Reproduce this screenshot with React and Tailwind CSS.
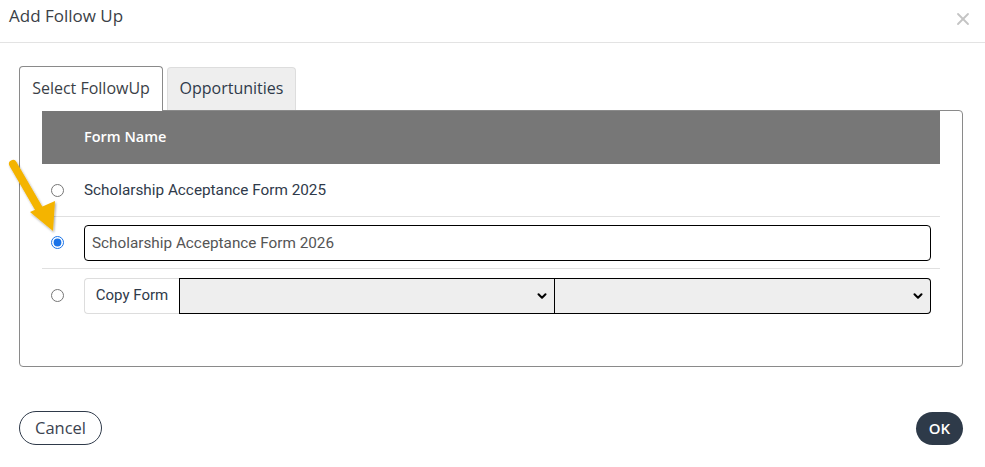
import { ChevronDown, X } from 'lucide-react'

export default function App() {
  return (
    <div className="relative w-[985px] h-[467px] bg-white overflow-hidden font-['Roboto',sans-serif]">
      <div className="flex items-center justify-between h-[43px] border-b border-[#e3e3e3] pl-[9px] pr-[12px]">
        <h1 className="text-[17px] text-[#3b3f47] font-['Open_Sans',sans-serif] -mt-[11px]">Add Follow Up</h1>
        <X size={20} strokeWidth={2.2} className="text-[#c4c4c4] -mt-[4px]" />
      </div>

      <div className="pt-[23px] pl-[19px] pr-[22px] w-full">
        <div className="flex items-end gap-[4px]">
          <div className="relative z-10 -mb-px w-[144px] h-[45px] flex items-center justify-center pb-[2px] bg-white border border-b-0 border-[#8a8a8a] rounded-t-[4px] text-[16px] text-[#3b3f47] font-['Open_Sans',sans-serif]">
            Select FollowUp
          </div>
          <div className="w-[129px] h-[43px] flex items-center justify-center pb-[2px] bg-[#eeeeee] border border-b-0 border-[#dddddd] rounded-t-[4px] text-[16px] text-[#2f3a4a] font-['Open_Sans',sans-serif]">
            Opportunities
          </div>
        </div>

        <div className="w-[944px] h-[257px] border border-[#8a8a8a] rounded-b-[4px] rounded-tr-[4px] px-[22px]">
          <div className="h-[53px] bg-[#777777] flex items-center pl-[42px] pb-[2px] text-[14.5px] font-semibold text-white font-['Open_Sans',sans-serif]">
            Form Name
          </div>

          <div className="flex items-center h-[53px] border-b border-[#e0e0e0]">
            <div className="w-[42px] flex pl-[9px]">
              <input type="radio" name="fu" className="w-[13px] h-[13px]" />
            </div>
            <span className="text-[15.3px] text-[#2f3a4a]">Scholarship Acceptance Form 2025</span>
          </div>

          <div className="flex items-center h-[52px] border-b border-[#e0e0e0]">
            <div className="w-[42px] flex pl-[9px]">
              <input type="radio" name="fu" defaultChecked className="w-[13px] h-[13px] accent-[#1a73e8]" />
            </div>
            <input
              type="text"
              defaultValue="Scholarship Acceptance Form 2026"
              className="w-[847px] h-[36px] border border-black rounded-[4px] px-[7px] text-[15.3px] text-[#555555] outline-none"
            />
          </div>

          <div className="flex items-center h-[53px]">
            <div className="w-[42px] flex pl-[9px]">
              <input type="radio" name="fu" className="w-[13px] h-[13px]" />
            </div>
            <div className="flex h-[36px]">
              <span className="w-[95px] flex items-center justify-center border border-r-0 border-[#dddddd] rounded-l-[4px] text-[15px] text-[#2f3a4a]">
                Copy Form
              </span>
              <div className="relative w-[376px]">
                <select className="appearance-none w-full h-full bg-[#eeeeee] border border-black" />
                <ChevronDown size={14} strokeWidth={3.5} className="absolute right-[6px] top-[11px] text-black pointer-events-none" />
              </div>
              <div className="relative w-[376px]">
                <select className="appearance-none w-full h-full bg-[#eeeeee] border border-l-0 border-black rounded-r-[4px]" />
                <ChevronDown size={14} strokeWidth={3.5} className="absolute right-[6px] top-[11px] text-black pointer-events-none" />
              </div>
            </div>
          </div>
        </div>

        <div className="flex justify-between items-center mt-[44px]">
          <button className="w-[83px] h-[34px] rounded-full border border-[#2f3a4a] text-[16.5px] text-[#3b4350] font-['Open_Sans',sans-serif]">
            Cancel
          </button>
          <button className="w-[47px] h-[33px] rounded-full bg-[#2e3a49] text-[15px] font-semibold text-white font-['Open_Sans',sans-serif]">
            OK
          </button>
        </div>
      </div>

      {/* annotation arrow */}
      <svg className="absolute left-[4px] top-[154px]" width="62" height="86" viewBox="0 0 62 86">
        <defs>
          <filter id="sh" x="-30%" y="-30%" width="160%" height="160%">
            <feDropShadow dx="1" dy="1.5" stdDeviation="1.2" floodColor="#000" floodOpacity="0.35" />
          </filter>
        </defs>
        <g filter="url(#sh)">
          <line x1="9" y1="10" x2="38" y2="60" stroke="#f4b400" strokeWidth="8" strokeLinecap="round" />
          <polygon points="26,58 51,47 49,77" fill="#f4b400" />
        </g>
      </svg>
    </div>
  )
}
